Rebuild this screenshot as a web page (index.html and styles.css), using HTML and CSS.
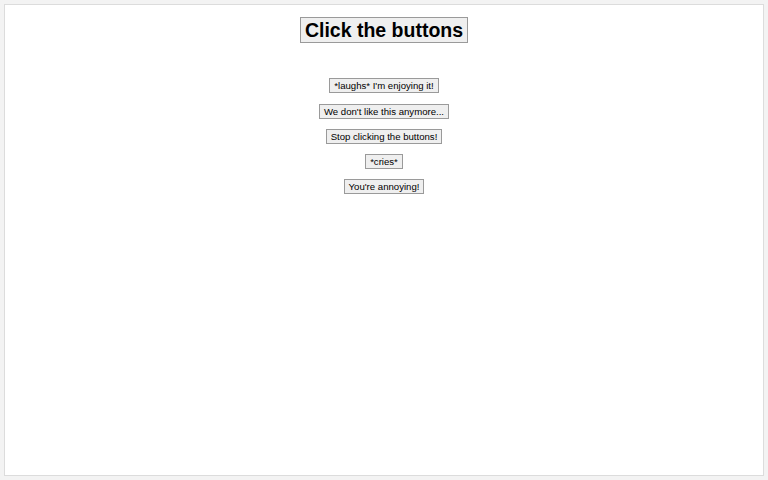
FILE: index.html
```html
<!DOCTYPE html>
<html>
<head>
<meta charset="utf-8">
<link rel="stylesheet" href="styles.css">
</head>
<body>
<div class="panel">
  <button class="title">Click the buttons</button>
  <div class="list">
    <button class="btn">*laughs* I'm enjoying it!</button>
    <button class="btn">We don't like this anymore...</button>
    <button class="btn">Stop clicking the buttons!</button>
    <button class="btn">*cries*</button>
    <button class="btn">You're annoying!</button>
  </div>
</div>
</body>
</html>
```
FILE: styles.css
```css
html {
  background: #f3f3f3;
}
body {
  margin: 0;
  padding: 4px 4px 4px 4px;
  height: 480px;
  box-sizing: border-box;
  font-family: "Liberation Sans", Arial, sans-serif;
}
.panel {
  background: #ffffff;
  border: 1px solid #dcdcdc;
  height: 100%;
  box-sizing: border-box;
  display: flex;
  flex-direction: column;
  align-items: center;
  padding-top: 12px;
}
button {
  font-family: "Liberation Sans", Arial, sans-serif;
  color: #000;
  background: #efefef;
  border: 1px solid #9a9a9a;
  border-radius: 0;
  line-height: 1.15;
  margin: 0;
}
.title {
  font-size: 19.5px;
  font-weight: bold;
  padding: 1px 4px;
}
.list {
  margin-top: 35px;
  display: flex;
  flex-direction: column;
  align-items: center;
  gap: 10.2px;
}
.btn {
  font-size: 9.6px;
  padding: 1px 4px;
}
```
